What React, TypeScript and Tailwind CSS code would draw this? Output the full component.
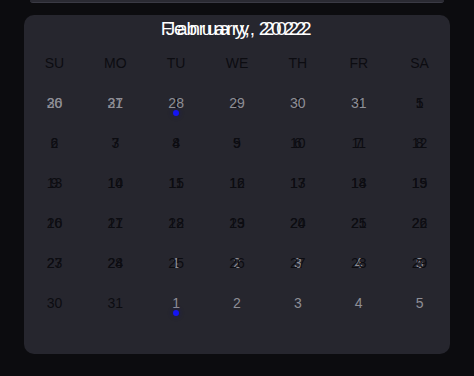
import React from "react";

type Cell = { d: number; cur: boolean; today: boolean };

function buildMonth(
  offset: number,
  prevLen: number,
  len: number,
  rows: number,
  isToday: (n: number, cur: boolean, next: boolean) => boolean
): Cell[] {
  const cells: Cell[] = [];
  for (let i = 0; i < rows * 7; i++) {
    const n = i - offset + 1;
    if (n < 1) cells.push({ d: prevLen + n, cur: false, today: false });
    else if (n > len)
      cells.push({ d: n - len, cur: false, today: isToday(n - len, false, true) });
    else cells.push({ d: n, cur: true, today: isToday(n, true, false) });
  }
  return cells;
}

const jan = buildMonth(6, 31, 31, 6, (n, _c, next) => next && n === 1);
const feb = buildMonth(2, 31, 28, 5, (n, cur) => cur && n === 1);

const days = ["SU", "MO", "TU", "WE", "TH", "FR", "SA"];

function Layer({ cells }: { cells: Cell[] }) {
  return (
    <div className="col-start-1 row-start-1 grid grid-cols-7 auto-rows-[40px]">
      {cells.map((c, i) => (
        <div key={i} className="relative flex items-center justify-center">
          <span
            className={
              "text-[14px] leading-none " +
              (c.cur ? "text-[#0c0c11]" : "text-[#8e8e96]")
            }
          >
            {c.d}
          </span>
          {c.today && (
            <span className="absolute left-1/2 top-[27px] h-[6px] w-[6px] -translate-x-1/2 rounded-full bg-[#1414f5] shadow-[0_0_4px_1px_rgba(20,20,120,0.35)]" />
          )}
        </div>
      ))}
    </div>
  );
}

export default function App() {
  return (
    <div
      className="flex h-[376px] w-[474px] flex-col bg-[#0c0c0f]"
      style={{ fontFamily: '"Liberation Sans", Arial, sans-serif' }}
    >
      <div className="mx-[30px] h-[3px] rounded-b-[4px] border-b border-[#3a3a44] bg-[#2a2a32]" />
      <div className="mx-[24px] mt-[12px] flex h-[339px] flex-col rounded-[10px] bg-[#26262e]">
        <div className="grid h-[28px] place-items-center">
          <span className="col-start-1 row-start-1 text-[19px] leading-[28px] tracking-[1.8px] text-white">
            January, 2022
          </span>
          <span className="col-start-1 row-start-1 text-[19px] leading-[28px] tracking-[1.8px] text-white">
            February, 2022
          </span>
        </div>
        <div className="grid h-[40px] grid-cols-7">
          {days.map((d) => (
            <div key={d} className="flex items-center justify-center text-[14px] text-[#0c0c11]">
              {d}
            </div>
          ))}
        </div>
        <div className="grid">
          <Layer cells={feb} />
          <Layer cells={jan} />
        </div>
      </div>
    </div>
  );
}
